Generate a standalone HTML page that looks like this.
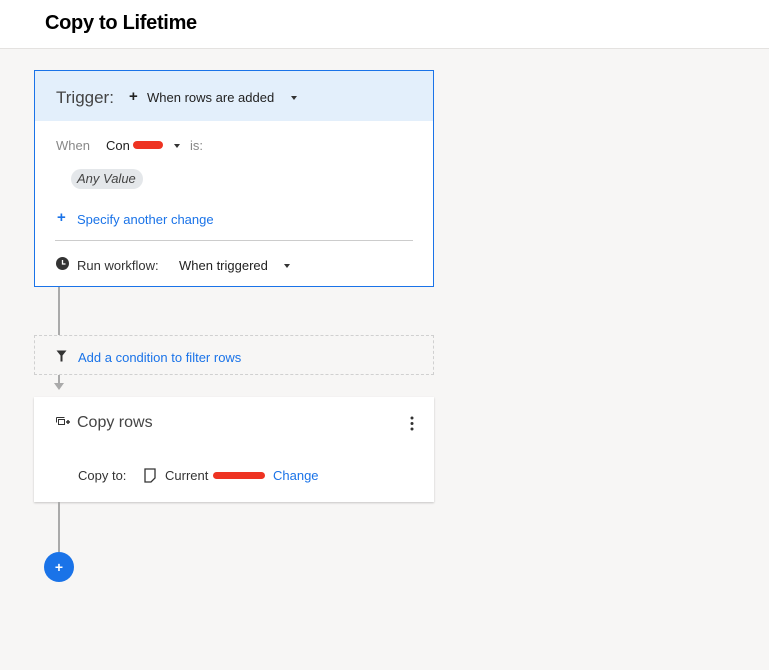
<!DOCTYPE html>
<html><head><meta charset="utf-8"><style>
*{box-sizing:border-box;margin:0;padding:0}
body{width:769px;height:670px;background:#f7f6f5;font-family:"Liberation Sans",sans-serif;position:relative;overflow:hidden;color:#222}
.hdr{position:absolute;left:0;top:0;width:769px;height:49px;background:#fff;border-bottom:1px solid #e4e2e0}
.hdr h1{position:absolute;left:45px;top:12px;font-size:20px;font-weight:bold;color:#000;letter-spacing:-0.3px}
.abs{position:absolute}
.card{left:34px;top:70px;width:400px;height:217px;background:#fff;border:1px solid #1a73e8}
.thead{position:absolute;left:0;top:0;width:398px;height:50px;background:#e3effb}
.blue{color:#1a73e8}
.grey{color:#888}
.line{background:#aaa;width:2px;left:58px}
.car{position:absolute;width:0;height:0;border-left:3px solid transparent;border-right:3px solid transparent;border-top:4px solid #333}
</style></head><body>
<div class="hdr"><h1>Copy to Lifetime</h1></div>
<div class="abs card">
 <div class="thead">
  <span class="abs" style="left:21px;top:17px;font-size:17px;color:#444">Trigger:</span>
  <span class="abs" style="left:94px;top:17px;font-size:15px;font-weight:bold">+</span>
  <span class="abs" style="left:112px;top:19px;font-size:13px">When rows are added</span>
  <span class="car" style="left:256px;top:25px"></span>
 </div>
 <span class="abs grey" style="left:21px;top:67px;font-size:13px">When</span>
 <span class="abs" style="left:71px;top:67px;font-size:13px">Con</span>
 <span class="abs" style="left:98px;top:70px;width:30px;height:8px;background:#e32;border-radius:4px"></span>
 <span class="car" style="left:139px;top:73px"></span>
 <span class="abs grey" style="left:155px;top:67px;font-size:13px">is:</span>
 <span class="abs" style="left:36px;top:98px;width:72px;height:20px;background:#e4e7ea;border-radius:10px;font-size:13px;font-style:italic;color:#444;padding:2px 6px">Any Value</span>
 <span class="abs blue" style="left:22px;top:138px;font-size:15px;font-weight:bold">+</span>
 <span class="abs blue" style="left:42px;top:141px;font-size:13px">Specify another change</span>
 <div class="abs" style="left:20px;top:169px;width:358px;height:1px;background:#ccc"></div>
 <svg class="abs" style="left:21px;top:186px" width="13" height="13" viewBox="0 0 13 13"><circle cx="6.5" cy="6.5" r="6.5" fill="#333"/><path d="M6.5 3v4h3" stroke="#fff" stroke-width="1.3" fill="none"/></svg>
 <span class="abs" style="left:42px;top:187px;font-size:13px;color:#333">Run workflow:</span>
 <span class="abs" style="left:144px;top:187px;font-size:13px">When triggered</span>
 <span class="car" style="left:249px;top:193px"></span>
</div>
<div class="abs line" style="top:287px;height:48px"></div>
<div class="abs" style="left:34px;top:335px;width:400px;height:40px;border:1px dashed #d0d0d0"></div>
<svg class="abs" style="left:56px;top:350px" width="11" height="12" viewBox="0 0 11 12"><path d="M0.5 0.5h10L6.5 5.5V11.5H4.5V5.5z" fill="#333"/></svg>
<span class="abs blue" style="left:78px;top:350px;font-size:13px">Add a condition to filter rows</span>
<div class="abs line" style="top:375px;height:8px"></div>
<span class="abs" style="left:54px;top:383px;width:0;height:0;border-left:5px solid transparent;border-right:5px solid transparent;border-top:7px solid #aaa"></span>
<div class="abs" style="left:34px;top:397px;width:400px;height:105px;background:#fff;box-shadow:0 1px 2px rgba(0,0,0,.2)"></div>
<svg class="abs" style="left:56px;top:417px" width="15" height="10" viewBox="0 0 15 10"><path d="M0.5 0.5h8M0.5 0.5v5M2.5 2.5h6v5h-6z" stroke="#333" stroke-width="1" fill="none"/><path d="M10 5h4M12 3v4" stroke="#333" stroke-width="1.5"/></svg>
<span class="abs" style="left:77px;top:414px;font-size:16px;color:#444">Copy rows</span>
<svg class="abs" style="left:410px;top:416px" width="4" height="15"><circle cx="2" cy="2" r="1.5" fill="#333"/><circle cx="2" cy="7.5" r="1.5" fill="#333"/><circle cx="2" cy="13" r="1.5" fill="#333"/></svg>
<span class="abs" style="left:78px;top:468px;font-size:13px;color:#333">Copy to:</span>
<svg class="abs" style="left:144px;top:468px" width="12" height="15" viewBox="0 0 12 15"><path d="M1 1h10v9l-4 4H1z" stroke="#333" stroke-width="1.3" fill="none"/></svg>
<span class="abs" style="left:165px;top:468px;font-size:13px;color:#333">Current</span>
<span class="abs" style="left:213px;top:472px;width:52px;height:7px;background:#e32;border-radius:4px"></span>
<span class="abs blue" style="left:273px;top:468px;font-size:13px">Change</span>
<div class="abs line" style="top:502px;height:50px"></div>
<div class="abs" style="left:44px;top:552px;width:30px;height:30px;border-radius:50%;background:#1a73e8;color:#fff;font-weight:bold;font-size:14px;text-align:center;line-height:30px">+</div>
</body></html>
